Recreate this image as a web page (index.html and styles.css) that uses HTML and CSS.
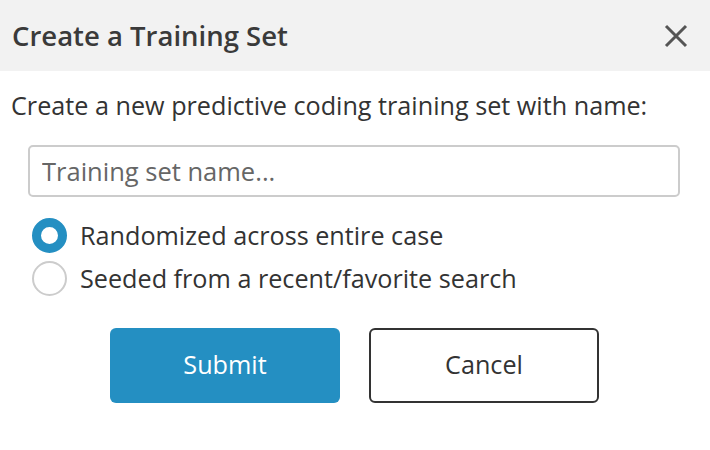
FILE: index.html
```html
<!DOCTYPE html>
<html>
<head>
<meta charset="utf-8">
<link rel="stylesheet" href="styles.css">
</head>
<body>
<div class="dialog">
  <div class="header">
    <div class="title">Create a Training Set</div>
    <svg class="close" width="24" height="24" viewBox="0 0 24 24"><path d="M2 2 L22 22 M22 2 L2 22" stroke="#555" stroke-width="3" fill="none"/></svg>
  </div>
  <div class="body">
    <p class="intro">Create a new predictive coding training set with name:</p>
    <div class="field"><input class="name" type="text" placeholder="Training set name..."></div>
    <div class="options">
      <label class="opt"><span class="radio checked"></span><span>Randomized across entire case</span></label>
      <label class="opt"><span class="radio"></span><span>Seeded from a recent/favorite search</span></label>
    </div>
    <div class="actions">
      <button class="btn primary">Submit</button>
      <button class="btn secondary">Cancel</button>
    </div>
  </div>
</div>
</body>
</html>
```
FILE: styles.css
```css
html, body { margin: 0; padding: 0; background: #fff; }
body { font-family: "Open Sans", "Liberation Sans", sans-serif; color: #333; }
.dialog { width: 710px; }
.header { height: 71px; background: #f2f2f2; display: flex; align-items: center; justify-content: space-between; padding: 0 22px 0 12px; box-sizing: border-box; }
.title { font-size: 27.5px; font-weight: 600; color: #3a3a3a; line-height: 36px; }
.close { display: block; }
.body { padding: 0 0 0 11px; }
.intro { margin: 18px 0 0; font-size: 25.2px; line-height: 32px; color: #333; white-space: nowrap; }
.field { padding: 24px 30px 0 17px; }
.name { display: block; width: 100%; box-sizing: border-box; height: 52px; border: 2px solid #ccc; border-radius: 5px; padding: 0 12px; font-family: inherit; font-size: 25.5px; color: #333; outline: none; }
.name::placeholder { color: #666; }
.options { padding: 20px 0 0 21px; display: flex; flex-direction: column; gap: 7px; }
.opt { display: flex; align-items: center; gap: 13px; font-size: 25.2px; line-height: 36px; color: #333; }
.radio { flex: none; width: 35px; height: 35px; box-sizing: border-box; border-radius: 50%; border: 2px solid #ccc; background: #fff; }
.radio.checked { border: 9px solid #248fc2; }
.actions { display: flex; gap: 29px; padding: 32px 0 0 99px; }
.btn { width: 230px; height: 75px; box-sizing: border-box; border-radius: 6px; font-family: inherit; font-size: 25.2px; padding: 0 0 4px; }
.primary { background: #248fc2; color: #fff; border: none; font-weight: 500; }
.secondary { background: #fff; color: #333; border: 2px solid #333; }
```
